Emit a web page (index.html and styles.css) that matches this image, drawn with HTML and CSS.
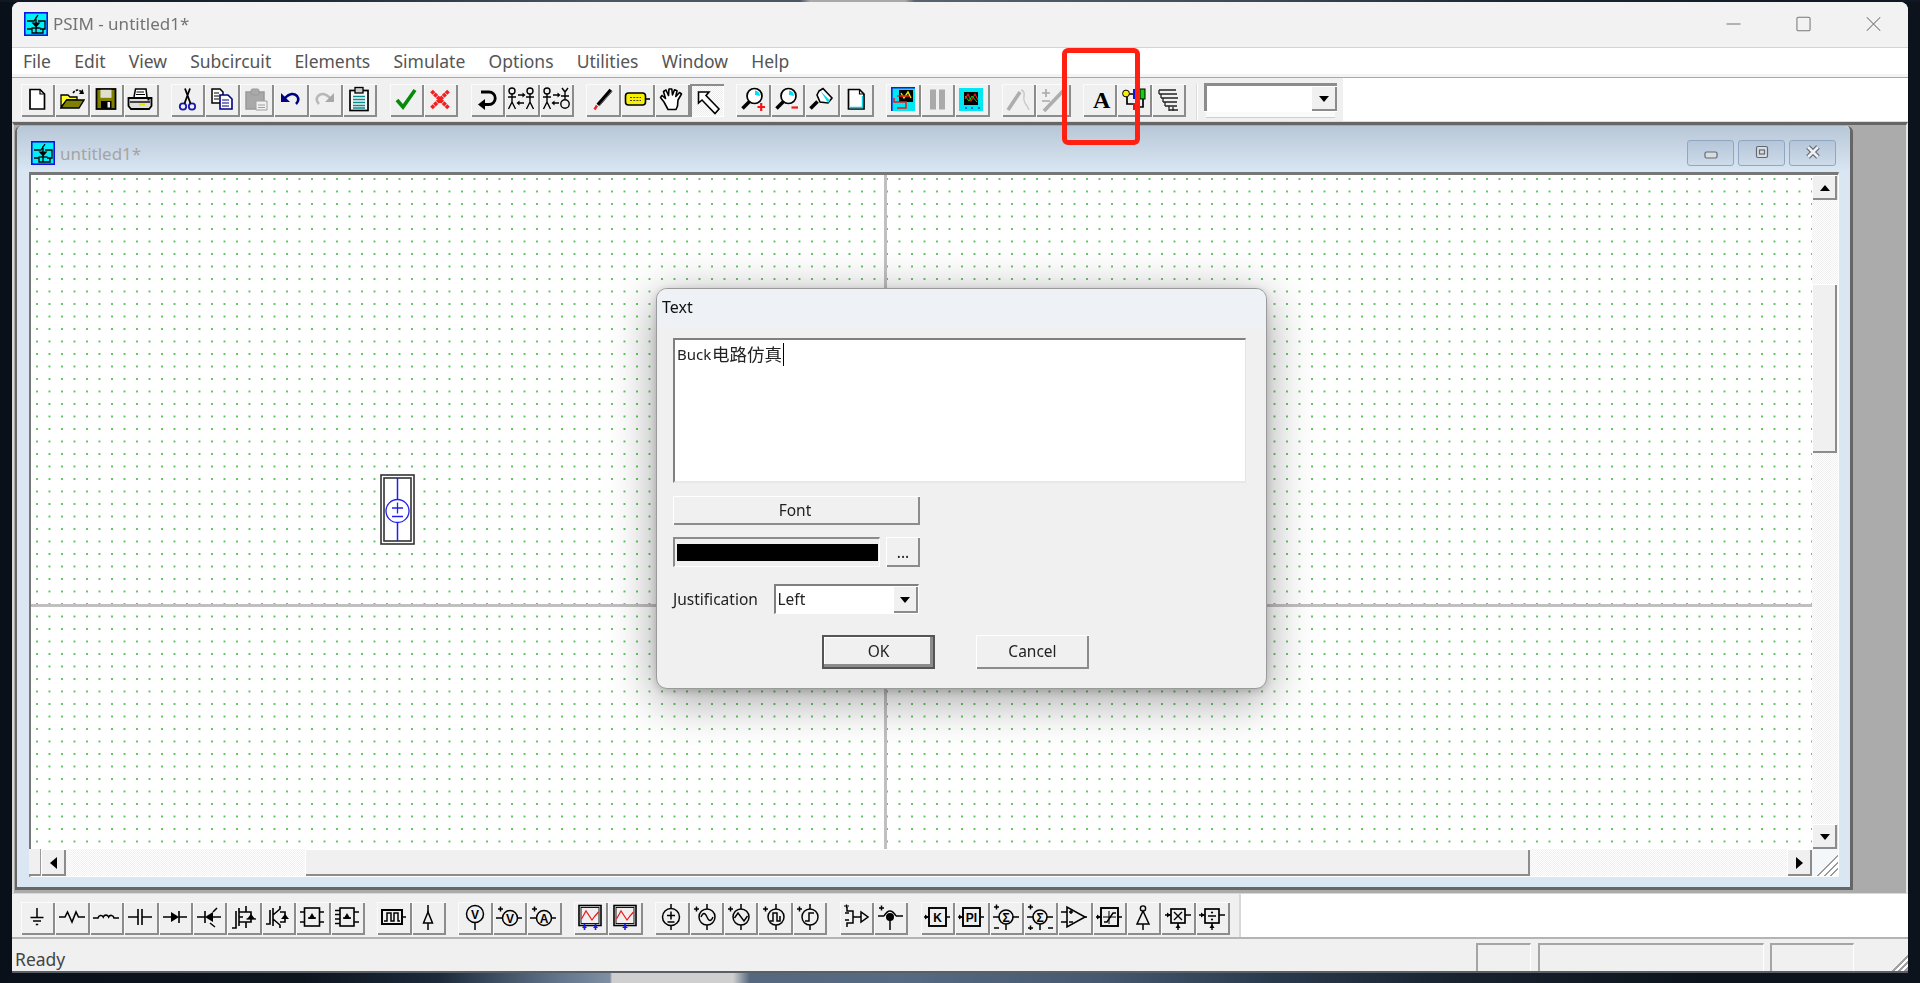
FILE: index.html
```
<!DOCTYPE html>
<html lang="en">
<head>
<meta charset="utf-8">
<title>PSIM - untitled1*</title>
<link rel="stylesheet" href="styles.css">
</head>
<body>
<svg class="defs" aria-hidden="true">
<defs>
<symbol id="psim" viewBox="0 0 24 24"><rect x=".8" y=".8" width="22.4" height="22.4" fill="#00f0f8" stroke="#1010e0" stroke-width="1.6"/><path d="M3 9H10L14 3M14 9H21V17H16M3 17H8V21H19V17M12 5V21" stroke="#000" stroke-width="1.3" fill="none"/><path d="M7.5 10.500H16.500L12 15.500Z" fill="#000"/><path d="M7.5 16H16.500" stroke="#000" stroke-width="1.3"/></symbol>
<symbol id="new" viewBox="0 0 26 26"><path d="M6 3.5H16L20.5 8V23H6Z" fill="#fff" stroke="#000" stroke-width="1.7"/><path d="M16 3.5V8H20.5" fill="none" stroke="#000" stroke-width="1.2"/></symbol>
<symbol id="open" viewBox="0 0 26 26"><path d="M2 21V9H9L11 11H18V14H8L2 21Z" fill="#ffff30" stroke="#000" stroke-width="1.3"/><path d="M2 22L7.5 14H25L20 22Z" fill="#808000" stroke="#000" stroke-width="1.3"/><path d="M14 7Q18 2 22 5.5" fill="none" stroke="#000" stroke-width="1.6" stroke-dasharray="2.5 1.2"/><path d="M20 8L25 8 23.5 3Z" fill="#000"/></symbol>
<symbol id="save" viewBox="0 0 26 26"><rect x="3.5" y="3" width="19" height="20" fill="#808000" stroke="#000" stroke-width="1.8"/><rect x="7.5" y="3.8" width="11" height="8" fill="#dfdfcf"/><rect x="8" y="15" width="10.5" height="7.5" fill="#000"/><rect x="14.5" y="16" width="2.5" height="5.5" fill="#eee"/></symbol>
<symbol id="print" viewBox="0 0 26 26"><path d="M7 11L8.5 3H19L20 11" fill="#fff" stroke="#000" stroke-width="1.5"/><path d="M9.5 6H17M9 8.5H18" stroke="#000" stroke-width="1"/><path d="M1.5 12H24.5V20L22 23H4L1.5 20Z" fill="#ddd" stroke="#000" stroke-width="1.8"/><path d="M3 16H23" stroke="#000" stroke-width="1.4"/><rect x="12" y="17.5" width="6" height="2" fill="#e8e000"/><rect x="20.5" y="13" width="2" height="1.5" fill="#000"/></symbol>
<symbol id="cut" viewBox="0 0 26 26"><circle cx="9" cy="20.5" r="3.2" fill="none" stroke="#1818b0" stroke-width="1.8"/><circle cx="18" cy="20.5" r="3.2" fill="none" stroke="#1818b0" stroke-width="1.8"/><path d="M10.5 17.5L16 2.5M16.5 17.5L11 2.5" stroke="#000" stroke-width="1.8" fill="none"/></symbol>
<symbol id="copy" viewBox="0 0 26 26"><path d="M3 3H11L14 6V17H3Z" fill="#fff" stroke="#000" stroke-width="1.5"/><path d="M5 7H10M5 10H10M5 13H10" stroke="#000"/><path d="M11 9H19L23 13V23H11Z" fill="#fff" stroke="#000080" stroke-width="1.6"/><path d="M13 14H20M13 17H20M13 20H20" stroke="#000080"/></symbol>
<symbol id="paste" viewBox="0 0 26 26"><path d="M3 6H21V23H3Z" fill="#a9a9a9" stroke="#999" stroke-width="1.5"/><rect x="8" y="3" width="8" height="6" rx="1.5" fill="#a9a9a9" stroke="#999"/><path d="M13 15H24V24H13Z" fill="#f0f0f0" stroke="#a0a0a0"/><path d="M15 19H22M15 21.5H22" stroke="#a0a0a0"/></symbol>
<symbol id="undo" viewBox="0 0 26 26"><path d="M8 12Q15 5 20 10Q23 14 19 18" fill="none" stroke="#000080" stroke-width="2.5"/><path d="M4 7V16H13Z" fill="#000080"/></symbol>
<symbol id="redo" viewBox="0 0 26 26"><path d="M18 12Q11 5 6 10Q3 14 7 18" fill="none" stroke="#b8b8b8" stroke-width="2.5"/><path d="M22 7V16H13Z" fill="#a8a8a8"/></symbol>
<symbol id="clip" viewBox="0 0 26 26"><rect x="4" y="4.5" width="18" height="20" fill="#f8f8f8" stroke="#000" stroke-width="1.7"/><rect x="9" y="1.5" width="8" height="5.5" fill="#ccc" stroke="#000" stroke-width="1.3"/><path d="M7 10.5H19M7 13.5H19M7 16.5H19M7 19.5H19M7 22H19" stroke="#0a8a8a" stroke-width="1.3"/></symbol>
<symbol id="ok" viewBox="0 0 26 26"><path d="M4 14L10 21L22 4" fill="none" stroke="#078a07" stroke-width="3.6"/></symbol>
<symbol id="no" viewBox="0 0 26 26"><path d="M4.5 5L21.5 22M21.5 5L4.5 22" fill="none" stroke="#f32020" stroke-width="3.8" stroke-dasharray="3.5 .6"/></symbol>
<symbol id="rot" viewBox="0 0 26 26"><path d="M7 6H15A6.2 6.2 0 0 1 15 18.5H10" fill="none" stroke="#000" stroke-width="2.8"/><path d="M11 13V24L4 18.5Z" fill="#000"/></symbol>
<symbol id="flip1" viewBox="0 0 30 26"><g fill="none" stroke="#000" stroke-width="1.4"><circle cx="6" cy="5" r="3"/><path d="M6 8V16M2 11H10M6 16L2.500 23M6 16L9.500 23"/><circle cx="24" cy="5" r="3"/><path d="M24 8V16M20 11H28M24 16L20.500 23M24 16L27.500 23M12 9H18M12 17H18"/></g><path d="M19.5 9L16.5 6.5V11.5ZM10.500 17L13.500 14.5V19.5Z" fill="#000"/></symbol>
<symbol id="flip2" viewBox="0 0 30 26"><g fill="none" stroke="#000" stroke-width="1.4"><circle cx="6" cy="5" r="3"/><path d="M6 8V16M2 11H10M6 16L2.500 23M6 16L9.500 23M21 2L24 6L27 2M24 6V13M20 10H28"/><circle cx="24" cy="18" r="4.2"/><path d="M12 9H18M12 17H18"/></g><path d="M19.5 9L16.5 6.5V11.5ZM10.500 17L13.500 14.5V19.5Z" fill="#000"/></symbol>
<symbol id="pencil" viewBox="0 0 26 26"><path d="M21 4L8 19" stroke="#000" stroke-width="4" fill="none"/><path d="M22 5L9 20" stroke="#777" stroke-width="1" fill="none"/><path d="M7 19.5L4.5 23.5" stroke="#f02020" stroke-width="2.4" fill="none"/></symbol>
<symbol id="label" viewBox="0 0 26 26"><rect x="1.5" y="7" width="20" height="12" rx="3" fill="#f8f000" stroke="#000" stroke-width="1.6"/><path d="M21 13H26" stroke="#000" stroke-width="1.6"/><path d="M6 11.5H17M6 14.5H17" stroke="#444" stroke-width="1.2" stroke-dasharray="2 1.2"/></symbol>
<symbol id="hand" viewBox="0 0 26 26"><path d="M6 16L2.5 11.5 4 9.5 7.5 12.5 5.5 5.5 8 4 10.5 9.5 11 3 13.8 3 14.5 9 16.5 3.8 19 4.8 17.8 10.5 21.5 6.5 23.5 8 20 14 19.5 20 18 23.5H10Z" fill="#fff" stroke="#000" stroke-width="1.6" stroke-linejoin="round"/></symbol>
<symbol id="arrow" viewBox="0 0 26 26"><path d="M3.5 3H14L11 6.5 24 20 20 24.5 7 11 3.5 14Z" fill="#fff" stroke="#000" stroke-width="1.6"/></symbol>
<symbol id="zin" viewBox="0 0 26 26"><circle cx="14.5" cy="10" r="7.5" fill="#fff" stroke="#000" stroke-width="1.7"/><path d="M15 4.5A5.5 5.5 0 0 1 20 10L15 9Z" fill="#00e0f0"/><path d="M9.5 15.5L2.5 22.5" stroke="#000" stroke-width="3.6"/><path d="M17.5 21H25M21.2 17V25" stroke="#f01818" stroke-width="2.2"/></symbol>
<symbol id="zout" viewBox="0 0 26 26"><circle cx="14.5" cy="10" r="7.5" fill="#fff" stroke="#000" stroke-width="1.7"/><path d="M15 4.5A5.5 5.5 0 0 1 20 10L15 9Z" fill="#00e0f0"/><path d="M9.5 15.5L2.5 22.5" stroke="#000" stroke-width="3.6"/><path d="M17.5 21.5H24" stroke="#f01818" stroke-width="2.2"/></symbol>
<symbol id="fit" viewBox="0 0 26 26"><path d="M11 5L15 2.5 24 12 20 17 12 16 9 9Z" fill="#fff" stroke="#000" stroke-width="1.6"/><path d="M12.5 5L22 14.5 20 17Z" fill="#00e0f0"/><path d="M9.5 15.5L2.5 22.5" stroke="#000" stroke-width="3.6"/></symbol>
<symbol id="page" viewBox="0 0 26 26"><path d="M5.5 3.5H16.5L21 8V23H5.5Z" fill="#fff" stroke="#000" stroke-width="1.7"/><path d="M7 21.5H19.5V10" fill="none" stroke="#00d8e8" stroke-width="1.4"/><path d="M16.5 3.5V8H21" fill="none" stroke="#000" stroke-width="1.2"/></symbol>
<symbol id="run" viewBox="0 0 26 26"><rect x="1" y="1" width="24" height="24" fill="#00e8f4"/><path d="M1.8 25V1.8H25" fill="none" stroke="#1818e0" stroke-width="1.6"/><rect x="9" y="4" width="14" height="12" fill="#000"/><path d="M11 7L14 12 18 6 21 12" fill="none" stroke="#e8e800" stroke-width="1.4"/><path d="M7 10H19M4 12V16H16V22H7" fill="none" stroke="#f01818" stroke-width="1.5"/></symbol>
<symbol id="pause" viewBox="0 0 26 26"><rect x="6" y="3.5" width="6" height="20" fill="#aaa"/><rect x="15" y="3.5" width="6" height="20" fill="#aaa"/></symbol>
<symbol id="sim" viewBox="0 0 26 26"><rect x="1" y="2" width="24" height="23" fill="#00e8f4"/><rect x="6" y="6" width="14" height="13" fill="#000"/><path d="M7 13L10 8 13 15 17 8 20 14" fill="none" stroke="#f01818" stroke-width="1.2"/><path d="M7 10L11 15 14 10 19 16" fill="none" stroke="#10d010" stroke-width="1"/><path d="M7 22H9M13 22H15M20 22H22" stroke="#2040e0" stroke-width="1.6"/></symbol>
<symbol id="dis1" viewBox="0 0 26 26"><path d="M3 24L15 6" stroke="#adadad" stroke-width="3.6" fill="none"/><path d="M16 4Q20 5 19 10T22 20L24 24" stroke="#c8c8c8" fill="none" stroke-width="1.4"/></symbol>
<symbol id="dis2" viewBox="0 0 26 26"><path d="M5 25L24 5" stroke="#adadad" stroke-width="3.6" fill="none"/><path d="M3 7H11M7 3V11M3 15H11" stroke="#a8a8a8" stroke-width="1.6"/></symbol>
<symbol id="blk" viewBox="0 0 26 26"><path d="M6 8H12M16 8H20M15 12V18H6V11M22 12V21H18" fill="none" stroke="#000" stroke-width="1.7"/><circle cx="5" cy="7.5" r="3.4" fill="#f8f000" stroke="#000"/><rect x="12" y="3" width="4" height="10" fill="#1010e0"/><rect x="19" y="3" width="5" height="10" fill="#10d010" stroke="#000"/><rect x="12" y="17" width="7" height="7" fill="#f01010"/></symbol>
<symbol id="tree" viewBox="0 0 26 26"><path d="M4 4H21M4 8H22M6 12H23M8 16H22M10 20H22M14 24H23M4 4V8M6 8V12M8 12V16M10 16V20M14 20V25M18 21V25" fill="none" stroke="#222" stroke-width="1.3"/></symbol>

<symbol id="gnd" viewBox="0 0 26 26"><path d="M13 4V13M6.5 13.5H19.5M9 17H17M11.8 20.5H14.2" stroke="#000" stroke-width="1.5"/></symbol>
<symbol id="res" viewBox="0 0 26 26"><path d="M0 13H6L8.5 8 13 18 17 8 19.5 13H26" fill="none" stroke="#000" stroke-width="1.6"/></symbol>
<symbol id="ind" viewBox="0 0 26 26"><path d="M0 14H5A3 3.5 0 0 1 10.3 13 3 3.5 0 0 1 15.6 13 3 3.5 0 0 1 21 14H26" fill="none" stroke="#000" stroke-width="1.6"/></symbol>
<symbol id="cap" viewBox="0 0 26 26"><path d="M1 13H11M11 5V21M15 5V21M15 13H25" fill="none" stroke="#000" stroke-width="1.6"/></symbol>
<symbol id="dio" viewBox="0 0 26 26"><path d="M1 13H9M17 13H25M17 7V19" fill="none" stroke="#000" stroke-width="1.6"/><path d="M9 8V18L17 13Z" fill="#000"/></symbol>
<symbol id="thy" viewBox="0 0 26 26"><path d="M1 13H9M17 13H25M9 7V19M17 8L21 4" fill="none" stroke="#000" stroke-width="1.6"/><path d="M17 8V18L9 13Z" fill="#000"/><path d="M14 19L19 23" stroke="#000" stroke-width="1.4"/></symbol>
<symbol id="mos" viewBox="0 0 26 26"><path d="M1 24H5V7M8 4V22M8 8H15V2M8 18H15V24M15 8H20V18H15M12 13H8" fill="none" stroke="#000" stroke-width="1.6"/><path d="M16 15H24L20 10Z" fill="#000"/><path d="M15.5 15H25" stroke="#000" stroke-width="1.3"/></symbol>
<symbol id="igb" viewBox="0 0 26 26"><path d="M1 20H5V6M8 4V22M8 11L15 5V2M8 15L15 21V24M15 8H20V18H15" fill="none" stroke="#000" stroke-width="1.6"/><path d="M16 15H24L20 10Z" fill="#000"/></symbol>
<symbol id="bk1" viewBox="0 0 26 26"><rect x="5.5" y="4" width="15" height="18" fill="none" stroke="#000" stroke-width="1.6"/><path d="M1 8H5.5M1 18H5.5M20.5 8H25M20.5 18H25M9 14H17" stroke="#000" stroke-width="1.5"/><path d="M9.5 15H16.5L13 9Z" fill="#000"/></symbol>
<symbol id="bk2" viewBox="0 0 26 26"><rect x="6" y="4" width="14" height="18" fill="none" stroke="#000" stroke-width="1.6"/><path d="M1 6.5H6M1 10.5H6M1 15H6M1 19.5H6M20 8H25M20 18H25M9 14H17" stroke="#000" stroke-width="1.3"/><path d="M9.5 15H16.5L13 9Z" fill="#000"/></symbol>
<symbol id="pul" viewBox="0 0 26 26"><rect x="2" y="6" width="20" height="14" fill="none" stroke="#000" stroke-width="2"/><path d="M4 17H7V9H11V17H14V9H18V17H20M22 13H26" fill="none" stroke="#000" stroke-width="1.5"/></symbol>
<symbol id="nod" viewBox="0 0 26 26"><path d="M13 1V8M13 19V26" stroke="#000" stroke-width="1.5"/><path d="M13 8L8.5 19H17.5Z" fill="none" stroke="#000" stroke-width="1.5"/></symbol>
<symbol id="vp" viewBox="0 0 26 26"><circle cx="13" cy="10" r="8.5" fill="none" stroke="#000" stroke-width="1.5"/><path d="M13 18.5V26" stroke="#000" stroke-width="1.5"/><text x="13" y="14.5" class="ict">V</text></symbol>
<symbol id="vm" viewBox="0 0 26 26"><circle cx="14" cy="14" r="7.5" fill="none" stroke="#000" stroke-width="1.5"/><path d="M0 14H6.5M21.5 14H26M2 5H7M4.5 2.5V7.5" stroke="#000" stroke-width="1.5"/><text x="14" y="18.5" class="ict">V</text></symbol>
<symbol id="am" viewBox="0 0 26 26"><circle cx="14" cy="14" r="7.5" fill="none" stroke="#000" stroke-width="1.5"/><path d="M0 14H6.5M21.5 14H26M2 5H7M4.5 2.5V7.5" stroke="#000" stroke-width="1.5"/><text x="14" y="18.5" class="ict">A</text></symbol>
<symbol id="sc1" viewBox="0 0 26 26"><rect x="2" y="1.5" width="22" height="20" fill="none" stroke="#000" stroke-width="1.6"/><rect x="4" y="3.5" width="18" height="16" fill="none" stroke="#000" stroke-width=".9"/><path d="M4.5 15L9 7 15 16 18 12 21.5 8" fill="none" stroke="#f01818" stroke-width="1.2"/><path d="M7.5 20V26M18.5 20V26" stroke="#1818f0" stroke-width="1.6"/><path d="M5 24L7.5 21 10 24ZM16 24L18.5 21 21 24Z" fill="#1818f0"/></symbol>
<symbol id="sc2" viewBox="0 0 26 26"><rect x="2" y="1.5" width="22" height="20" fill="none" stroke="#000" stroke-width="1.6"/><rect x="4" y="3.5" width="18" height="16" fill="none" stroke="#000" stroke-width=".9"/><path d="M4.5 15L9 7 15 16 18 12 21.5 8" fill="none" stroke="#f01818" stroke-width="1.2"/><path d="M13 20V26" stroke="#1818f0" stroke-width="1.6"/><path d="M10 24L13 21 16 24Z" fill="#1818f0"/></symbol>
<symbol id="vdc" viewBox="0 0 26 26"><circle cx="13" cy="13" r="8.5" fill="none" stroke="#000" stroke-width="1.5"/><path d="M13 0V4.5M13 21.5V26M9 11.5H17M13 7.5V15.5M9.5 18H16.5" stroke="#000" stroke-width="1.5"/></symbol>
<symbol id="vsin" viewBox="0 0 26 26"><circle cx="14" cy="13" r="8" fill="none" stroke="#000" stroke-width="1.5"/><path d="M14 0V5M14 21V26M1 5H6M3.5 2.5V7.5" stroke="#000" stroke-width="1.5"/><path d="M8 13Q11 6 14 13T20 13" fill="none" stroke="#000" stroke-width="1.4"/></symbol>
<symbol id="vtri" viewBox="0 0 26 26"><circle cx="14" cy="13" r="8" fill="none" stroke="#000" stroke-width="1.5"/><path d="M14 0V5M14 21V26M1 5H6M3.5 2.5V7.5" stroke="#000" stroke-width="1.5"/><path d="M7.5 14L11 9 17 17 20.5 12" fill="none" stroke="#000" stroke-width="1.4"/></symbol>
<symbol id="vsq" viewBox="0 0 26 26"><circle cx="14" cy="13" r="8" fill="none" stroke="#000" stroke-width="1.5"/><path d="M14 0V5M14 21V26M1 5H6M3.5 2.5V7.5" stroke="#000" stroke-width="1.5"/><path d="M8 17H11V9H15V17H18V12" fill="none" stroke="#000" stroke-width="1.5"/></symbol>
<symbol id="vst" viewBox="0 0 26 26"><circle cx="14" cy="13" r="8" fill="none" stroke="#000" stroke-width="1.5"/><path d="M14 0V5M14 21V26M1 5H6M3.5 2.5V7.5" stroke="#000" stroke-width="1.5"/><path d="M9 17H13V9H18" fill="none" stroke="#000" stroke-width="1.5"/></symbol>
<symbol id="log" viewBox="0 0 26 26"><path d="M4 3V7H10V19H4V23M10 13H18M2 9H6M2 16H6" fill="none" stroke="#000" stroke-width="1.5"/><path d="M18 8V18L25 13Z" fill="none" stroke="#000" stroke-width="1.5"/><path d="M1 2H6M3.5 .5V4" stroke="#000" stroke-width="1.2"/></symbol>
<symbol id="sen" viewBox="0 0 26 26"><path d="M1 12H7M19 12H26M13 16V26M2 4H7M4.5 1.5V6.5M7 12Q13 2 19 12" fill="none" stroke="#000" stroke-width="1.5"/><circle cx="13" cy="13" r="4" fill="#000"/></symbol>
<symbol id="kk" viewBox="0 0 26 26"><rect x="5" y="4" width="17" height="18" fill="none" stroke="#000" stroke-width="1.9"/><path d="M0 13H5M22 13H26" stroke="#000" stroke-width="1.5"/><path d="M1 10.5L4.5 13 1 15.5Z" fill="#000"/><text x="13.5" y="18" class="ict">K</text></symbol>
<symbol id="pi" viewBox="0 0 26 26"><rect x="5" y="4" width="17" height="18" fill="none" stroke="#000" stroke-width="1.9"/><path d="M0 13H5M22 13H26" stroke="#000" stroke-width="1.5"/><path d="M1 10.5L4.5 13 1 15.5Z" fill="#000"/><text x="13.5" y="18" class="ict">PI</text></symbol>
<symbol id="sum1" viewBox="0 0 26 26"><circle cx="13" cy="13" r="7" fill="none" stroke="#000" stroke-width="1.6"/><path d="M0 13H6M20 13H26M13 20V26M1 3H6M3.5 .5V5.5M1 24H6" stroke="#000" stroke-width="1.5"/><text x="13" y="17.5" class="ict">Σ</text></symbol>
<symbol id="sum2" viewBox="0 0 26 26"><circle cx="13" cy="13" r="7" fill="none" stroke="#000" stroke-width="1.6"/><path d="M0 13H6M20 13H26M13 20V26M1 3H6M3.5 .5V5.5M1 24H6M3.5 21.5V26.5M21 24H26" stroke="#000" stroke-width="1.5"/><text x="13" y="17.5" class="ict">Σ</text></symbol>
<symbol id="opa" viewBox="0 0 26 26"><path d="M6 3V23L24 13Z" fill="none" stroke="#000" stroke-width="1.6"/><path d="M0 8H6M0 18H6M24 13H26M8 8H12M10 6V10M8 18H12" stroke="#000" stroke-width="1.5"/></symbol>
<symbol id="lim" viewBox="0 0 26 26"><rect x="5" y="4" width="17" height="18" fill="none" stroke="#000" stroke-width="1.9"/><path d="M0 13H5M22 13H26M8 18H11L17 9H20" fill="none" stroke="#000" stroke-width="1.5"/><path d="M7 13H20M13 7V20" stroke="#000" stroke-width="1"/><path d="M1 10.5L4.5 13 1 15.5Z" fill="#000"/></symbol>
<symbol id="gat" viewBox="0 0 26 26"><circle cx="13" cy="4.5" r="2.6" fill="none" stroke="#000" stroke-width="1.4"/><path d="M13 7L7 20H19ZM13 20V26" fill="none" stroke="#000" stroke-width="1.5"/></symbol>
<symbol id="mul" viewBox="0 0 26 26"><rect x="6" y="5" width="14" height="14" fill="none" stroke="#000" stroke-width="1.7"/><path d="M0 11H6M20 11H26M13 19V26M9 8L17 16M17 8L9 16" stroke="#000" stroke-width="1.4"/><path d="M2 8.5L5.5 11 2 13.5ZM10.5 24L13 20 15.5 24Z" fill="#000"/></symbol>
<symbol id="div" viewBox="0 0 26 26"><rect x="6" y="5" width="14" height="14" fill="none" stroke="#000" stroke-width="1.7"/><path d="M0 11H6M20 11H26M13 19V26M9 12H17" stroke="#000" stroke-width="1.4"/><circle cx="13" cy="8.5" r="1.1" fill="#000"/><circle cx="13" cy="15.5" r="1.1" fill="#000"/><path d="M2 8.5L5.5 11 2 13.5ZM10.5 24L13 20 15.5 24Z" fill="#000"/></symbol>
</defs>
</svg>

<div class="window">
  <header class="titlebar">
    <svg class="appicon"><use href="#psim"/></svg>
    <span class="apptitle">PSIM - untitled1*</span>
    <div class="winctrls">
      <svg class="wc" viewBox="0 0 16 16"><path d="M.5 8H15.5"/></svg>
      <svg class="wc" viewBox="0 0 16 16"><rect x="1" y=".7" width="14" height="14.6" rx="1.5"/></svg>
      <svg class="wc" viewBox="0 0 16 16"><path d="M.8.8L15.2 15.2M15.2.8L.8 15.2"/></svg>
    </div>
  </header>
  <nav class="menubar">
    <span>File</span><span>Edit</span><span>View</span><span>Subcircuit</span><span>Elements</span><span>Simulate</span><span>Options</span><span>Utilities</span><span>Window</span><span>Help</span>
  </nav>
  <div class="toolrow toolrow-top">
    <div class="toolbar">
      <div class="grp"><button class="b"><svg><use href="#new"/></svg></button><button class="b"><svg><use href="#open"/></svg></button><button class="b"><svg><use href="#save"/></svg></button><button class="b"><svg><use href="#print"/></svg></button></div>
      <div class="grp"><button class="b"><svg><use href="#cut"/></svg></button><button class="b"><svg><use href="#copy"/></svg></button><button class="b"><svg><use href="#paste"/></svg></button><button class="b"><svg><use href="#undo"/></svg></button><button class="b"><svg><use href="#redo"/></svg></button><button class="b"><svg><use href="#clip"/></svg></button></div>
      <div class="grp"><button class="b"><svg><use href="#ok"/></svg></button><button class="b"><svg><use href="#no"/></svg></button></div>
      <div class="grp"><button class="b"><svg><use href="#rot"/></svg></button><button class="b"><svg class="wide"><use href="#flip1"/></svg></button><button class="b"><svg class="wide"><use href="#flip2"/></svg></button></div>
      <div class="grp"><button class="b"><svg><use href="#pencil"/></svg></button><button class="b"><svg><use href="#label"/></svg></button><button class="b"><svg><use href="#hand"/></svg></button><button class="b active"><svg><use href="#arrow"/></svg></button></div>
      <div class="grp"><button class="b"><svg><use href="#zin"/></svg></button><button class="b"><svg><use href="#zout"/></svg></button><button class="b"><svg><use href="#fit"/></svg></button><button class="b"><svg><use href="#page"/></svg></button></div>
      <div class="grp"><button class="b"><svg><use href="#run"/></svg></button><button class="b"><svg><use href="#pause"/></svg></button><button class="b"><svg><use href="#sim"/></svg></button></div>
      <div class="grp"><button class="b"><svg><use href="#dis1"/></svg></button><button class="b"><svg><use href="#dis2"/></svg></button></div>
      <div class="grp"><button class="b b-a"><span class="glyph-a">A</span></button><button class="b"><svg><use href="#blk"/></svg></button><button class="b"><svg><use href="#tree"/></svg></button></div>
      <div class="tsep"></div>
      <div class="combo"><span class="combo-btn"><span class="tri"></span></span></div>
    </div>
  </div>

  <main class="mdi">
    <section class="child">
      <div class="child-title">
        <svg class="childicon"><use href="#psim"/></svg>
        <span class="childname">untitled1*</span>
        <div class="childctrls">
          <span class="cb"><svg viewBox="0 0 24 16"><rect x="6" y="7" width="12" height="6" rx="1.5"/></svg></span>
          <span class="cb"><svg viewBox="0 0 24 16"><rect x="6.5" y="1.5" width="11" height="11" rx="1.5"/><rect x="9.5" y="5" width="5" height="4"/></svg></span>
          <span class="cb"><svg viewBox="0 0 24 16"><path d="M7 2L17 12M17 2L7 12" class="cx1"/><path d="M7 2L17 12M17 2L7 12" class="cx2"/></svg></span>
        </div>
      </div>
      <div class="frame">
        <div class="canvas">
          <span class="cross-v"></span><span class="cross-h"></span>
          <svg class="element" viewBox="0 0 35 71">
            <rect x="1" y="1" width="33" height="69" fill="#fff" stroke="#333" stroke-width="1.6"/>
            <rect x="4" y="4" width="27" height="63" fill="none" stroke="#333" stroke-width="1.6"/>
            <path d="M17.5 4V26M17.5 48V67" stroke="#2020f0" stroke-width="1.5"/>
            <circle cx="17.5" cy="37" r="11.5" fill="#fff" stroke="#2020f0" stroke-width="1.3"/>
            <path d="M12 34H23M17.5 28.500V39.500M12 42.500H23" stroke="#2020f0" stroke-width="1.3"/>
          </svg>
        </div>
        <div class="vscroll">
          <button class="sb"><span class="tri tri-up"></span></button>
          <div class="track"><div class="vthumb"></div></div>
          <button class="sb"><span class="tri"></span></button>
        </div>
        <div class="hscroll">
          <span class="hstub"></span>
          <button class="sb"><span class="tri tri-left"></span></button>
          <div class="track"><div class="hthumb"></div></div>
          <button class="sb"><span class="tri tri-right"></span></button>
        </div>
        <div class="grip"></div>
      </div>
    </section>
  </main>

  <div class="toolrow toolrow-bottom">
    <div class="toolbar">
      <div class="grp"><button class="b"><svg><use href="#gnd"/></svg></button><button class="b"><svg><use href="#res"/></svg></button><button class="b"><svg><use href="#ind"/></svg></button><button class="b"><svg><use href="#cap"/></svg></button><button class="b"><svg><use href="#dio"/></svg></button><button class="b"><svg><use href="#thy"/></svg></button><button class="b"><svg><use href="#mos"/></svg></button><button class="b"><svg><use href="#igb"/></svg></button><button class="b"><svg><use href="#bk1"/></svg></button><button class="b"><svg><use href="#bk2"/></svg></button></div>
      <div class="grp"><button class="b"><svg><use href="#pul"/></svg></button><button class="b"><svg><use href="#nod"/></svg></button></div>
      <div class="grp"><button class="b"><svg><use href="#vp"/></svg></button><button class="b"><svg><use href="#vm"/></svg></button><button class="b"><svg><use href="#am"/></svg></button></div>
      <div class="grp"><button class="b"><svg><use href="#sc1"/></svg></button><button class="b"><svg><use href="#sc2"/></svg></button></div>
      <div class="grp"><button class="b"><svg><use href="#vdc"/></svg></button><button class="b"><svg><use href="#vsin"/></svg></button><button class="b"><svg><use href="#vtri"/></svg></button><button class="b"><svg><use href="#vsq"/></svg></button><button class="b"><svg><use href="#vst"/></svg></button></div>
      <div class="grp"><button class="b"><svg><use href="#log"/></svg></button><button class="b"><svg><use href="#sen"/></svg></button></div>
      <div class="grp"><button class="b"><svg><use href="#kk"/></svg></button><button class="b"><svg><use href="#pi"/></svg></button><button class="b"><svg><use href="#sum1"/></svg></button><button class="b"><svg><use href="#sum2"/></svg></button><button class="b"><svg><use href="#opa"/></svg></button><button class="b"><svg><use href="#lim"/></svg></button><button class="b"><svg><use href="#gat"/></svg></button><button class="b"><svg><use href="#mul"/></svg></button><button class="b"><svg><use href="#div"/></svg></button></div>
    </div>
  </div>

  <footer class="statusbar">
    <span class="ready">Ready</span>
    <span class="pane pane-a"></span><span class="pane pane-b"></span><span class="pane pane-c"></span>
    <span class="corner"></span>
  </footer>
</div>

<div class="dialog">
  <div class="dlg-title">Text</div>
  <div class="dlg-body">
    <div class="textbox"><span class="tb-lat">Buck</span><span class="tb-cjk">电路仿真</span><span class="caret"></span></div>
    <button class="wb font-btn">Font</button>
    <div class="color-row">
      <div class="swatch"><span class="swatch-fill"></span></div>
      <button class="wb dots">...</button>
    </div>
    <div class="just-row">
      <span class="just-label">Justification</span>
      <div class="select"><span class="sel-text">Left</span><span class="sel-btn"><span class="tri"></span></span></div>
    </div>
    <div class="dlg-actions">
      <button class="wb act default">OK</button>
      <button class="wb act">Cancel</button>
    </div>
  </div>
</div>

<div class="annotation"></div>
</body>
</html>
```

FILE: styles.css
```
* { box-sizing: border-box; }
html, body { margin: 0; padding: 0; }
body {
  width: 1920px;
  height: 983px;
  overflow: hidden;
  padding: 2px 12px 0;
  position: relative;
  font-family: "Noto Sans", "Open Sans", sans-serif;
  background:
    linear-gradient(90deg, #0e1722 0, #1c2733 300px, #4b5663 600px, #4b5663 800px, #a9a9a9 810px, #a9a9a9 905px, #59636f 915px, #3c4652 1280px, #1c2733 1500px, #0e1722 1920px) top left / 100% 2px no-repeat,
    linear-gradient(90deg, #0a1019 0, #0c141e 300px, #1c2a3b 440px, #62758c 560px, #7f8fa3 610px, #cfcfcf 612px, #cfcfcf 733px, #55677e 750px, #566a83 900px, #45586f 1100px, #2a3a4d 1270px, #18222f 1460px, #0c131c 1700px, #0c131c 1920px);
}
.defs { position: absolute; width: 0; height: 0; }
.ict { font: 700 12px "Liberation Sans", sans-serif; text-anchor: middle; fill: #000; stroke: none; }

.window {
  width: 1896px;
  height: 969px;
  display: flex;
  flex-direction: column;
  background: #f0f0f0;
  border-radius: 8px 8px 0 0;
  overflow: hidden;
  box-shadow: 0 2px 0 #5a5f66;
  filter: blur(.35px);
}
.titlebar {
  height: 45px;
  flex: none;
  background: #f2f2f2;
  display: flex;
  align-items: center;
  padding-left: 12px;
  padding-bottom: 2px;
}
.appicon { width: 24px; height: 24px; }
.apptitle { margin-left: 5px; font-size: 17px; color: #737373; }
.winctrls { margin-left: auto; display: flex; gap: 55px; padding-right: 27px; align-items: center; }
.wc { width: 15px; height: 16px; fill: none; stroke: #777; stroke-width: 1.1; }

.menubar {
  height: 31px;
  flex: none;
  background: #fff;
  border-top: 1px solid #d4d4d4;
  border-bottom: 1px solid #a8a8a8;
  box-shadow: inset 0 -3px 0 #f4f4f4;
  display: flex;
  gap: 23.2px;
  align-items: center;
  padding: 0 0 3px 11px;
  font-size: 17.500px;
  color: #555;
}
.toolrow { background: #fff; flex: none; }
.toolrow-top { height: 44px; border-bottom: 1px solid #ddd; }
.toolrow-bottom { height: 45px; border-bottom: 2px solid #b4b4b4; }
.toolbar {
  height: 100%;
  background: #f0f0f0;
  display: flex;
  gap: 12.4px;
  padding: 6px 0 0 9px;
}
.toolrow-top .toolbar { width: 1331px; }
.toolrow-bottom .toolbar { width: 1229px; padding-top: 8px; border-right: 2px solid #d8d8d8; }
.grp { display: flex; }
.b {
  width: 34.4px;
  height: 33px;
  padding: 0 2px 3px 0;
  margin: 0;
  border: 0;
  background: #f0f0f0;
  box-shadow: inset 1px 1px 0 #fbfbfb, inset -2px -2px 0 #8c8c8c;
  display: flex;
  align-items: center;
  justify-content: center;
}
.b svg { width: 26px; height: 26px; flex: none; }
.b svg.wide { width: 30px; }
.b.b-a { padding: 0 0 1px 3px; }
.b.active {
  background: repeating-conic-gradient(#ffffff 0 25%, #ececec 0 50%) 0 0 / 2px 2px;
  box-shadow: inset 2px 2px 0 #8c8c8c, inset -1px -1px 0 #fff;
  padding: 2px 0 0 2px;
}
.glyph-a { font: 700 24px "Liberation Serif", serif; color: #000; }
.tsep { width: 2px; height: 36px; margin: 0 -6px 0 -3px; background: #dcdcdc; border-right: 1px solid #fff; }
.combo {
  width: 133px;
  height: 28px;
  margin-top: -1px;
  background: #fff;
  border-top: 3px solid #8c8c8c;
  border-left: 3px solid #8c8c8c;
  box-shadow: 0 1px 0 #fff, 0 8px 0 -2px #fafafa, 0 9px 0 -2px #cfcfcf;
  display: flex;
  justify-content: flex-end;
}
.combo-btn, .sel-btn {
  width: 26px;
  height: 100%;
  background: #f0f0f0;
  box-shadow: inset 1px 1px 0 #fff, inset -2px -2px 0 #8c8c8c;
  display: flex;
  align-items: center;
  justify-content: center;
}
.tri { width: 0; height: 0; border-left: 5px solid transparent; border-right: 5px solid transparent; border-top: 6px solid #000; display: block; }
.tri-up { border-top: 0; border-bottom: 6px solid #000; }
.tri-left { border: 0 solid transparent; border-width: 6px 7px 6px 0; border-right-color: #000; }
.tri-right { border: 0 solid transparent; border-width: 6px 0 6px 7px; border-left-color: #000; }

.mdi {
  flex: 1;
  min-height: 0;
  background: #ababab;
  border-top: 3px solid #666;
  border-left: 2px solid #d8d8d8;
  border-right: 2px solid #e4e4e4;
  border-bottom: 1px solid #d8d8d8;
  padding: 1px 53px 3px 1px;
}
.child {
  height: 100%;
  display: flex;
  flex-direction: column;
  background: #dae6f2;
  border-right: 3px solid #666;
  border-bottom: 3px solid #666;
  border-top: 0;
  border-left: 2px solid #666;
  border-radius: 6px 6px 0 0;
  padding: 0 11px 10px 12px;
}
.child-title {
  height: 46px;
  flex: none;
  margin: 0 -11px 0 -12px;
  padding: 8px 14px 0 14px;
  background: linear-gradient(#b8c7d7, #d9e6f3);
  border-radius: 6px 6px 0 0;
  display: flex;
  align-items: center;
}
.childicon { width: 24px; height: 24px; }
.childname { margin-left: 5px; font-size: 17px; color: #a4a4a4; }
.childctrls { margin-left: auto; display: flex; gap: 4px; margin-right: 0; }
.cb {
  width: 47px;
  height: 26px;
  border: 1px solid #90a7c2;
  border-radius: 3px;
  background: linear-gradient(#b5c6d9, #cddbea);
  display: flex;
  align-items: center;
  justify-content: center;
}
.cb svg { width: 24px; height: 16px; fill: #dcdcdc; stroke: #5f6a78; stroke-width: 1.2; }
.cb .cx1 { stroke: #5f6a78; stroke-width: 5; fill: none; }
.cb .cx2 { stroke: #f0f0f0; stroke-width: 2.6; fill: none; }

.frame {
  flex: 1;
  min-height: 0;
  display: grid;
  grid-template-columns: 1fr 26px;
  grid-template-rows: 1fr 27px;
  border-top: 3px solid #777;
  border-left: 2px solid #777;
  border-right: 1px solid #fff;
  border-bottom: 1px solid #fff;
}
.canvas {
  position: relative;
  overflow: hidden;
  background-color: #fff;
  background-image: radial-gradient(circle at 1px 1px, #48bc48 .6px, rgba(72,188,72,0) 1.3px);
  background-size: 12.5px 12.5px;
  background-position: 5px 3px;
}
.cross-v { position: absolute; left: 853px; top: 0; bottom: 0; width: 2.5px; background: #c0c0c0; }
.cross-h { position: absolute; left: 0; right: 0; top: 429px; height: 2.5px; background: #c0c0c0; }
.element { position: absolute; left: 349px; top: 299px; width: 35px; height: 71px; }
.vscroll { display: flex; flex-direction: column; }
.hscroll { display: flex; margin-left: -2px; }
.track {
  flex: 1;
  min-width: 0;
  min-height: 0;
  background: repeating-conic-gradient(#ffffff 0 25%, #f0f0f0 0 50%) 0 0 / 2px 2px;
  position: relative;
}
.sb {
  width: 25px;
  height: 25px;
  flex: none;
  padding: 0;
  border: 0;
  background: #f0f0f0;
  box-shadow: inset 1px 1px 0 #fff, inset -2px -2px 0 #8c8c8c;
  display: flex;
  align-items: center;
  justify-content: center;
}
.hscroll .sb { height: 100%; }
.hstub { width: 12px; border-right: 1px solid #999; background: #f0f0f0; box-shadow: inset 0 -2px 0 #8c8c8c; flex: none; }
.vthumb { position: absolute; left: 0; width: 25px; top: 84px; height: 169px; background: #f0f0f0; box-shadow: inset 1px 1px 0 #fff, inset -2px -2px 0 #8c8c8c; }
.hthumb { position: absolute; top: 0; bottom: 0; left: 239px; width: 1225px; background: #f0f0f0; box-shadow: inset 1px 1px 0 #fff, inset -2px -2px 0 #8c8c8c; }
.grip { background: linear-gradient(135deg, #f4f7fa 60%, #9a9a9a 60%, #9a9a9a 64%, #fff 64%, #fff 72%, #9a9a9a 72%, #9a9a9a 76%, #fff 76%, #fff 84%, #9a9a9a 84%, #9a9a9a 88%, #fff 88%); }

.statusbar {
  height: 32px;
  flex: none;
  background: #f0f0f0;
  display: flex;
  align-items: flex-end;
  padding-right: 54px;
  position: relative;
}
.ready { margin-right: auto; padding: 0 0 0 3px; font-size: 17.500px; line-height: 24px; color: #444; }
.pane { height: 28px; border-top: 2px solid #a5a5a5; border-left: 2px solid #a5a5a5; border-right: 1px solid #fff; }
.pane-a { width: 55px; margin-right: 7px; }
.pane-b { width: 226px; margin-right: 6px; }
.pane-c { width: 84px; }
.corner { position: absolute; right: 0; bottom: 0; width: 18px; height: 18px; background: linear-gradient(135deg, transparent 55%, #a0a0a0 55%, #a0a0a0 62%, #fff 62%, #fff 72%, #a0a0a0 72%, #a0a0a0 79%, #fff 79%, #fff 88%, #a0a0a0 88%); }

.dialog {
  position: absolute;
  left: 656px;
  top: 288px;
  width: 611px;
  height: 401px;
  background: #f0f0f0;
  border: 1px solid #9a9a9a;
  border-radius: 11px;
  box-shadow: 0 10px 48px rgba(0,0,0,.38), 0 2px 8px rgba(0,0,0,.18);
  overflow: hidden;
  font-size: 15.500px;
  color: #222;
  display: flex;
  flex-direction: column;
  filter: blur(.35px);
}
.dlg-title { height: 39px; flex: none; background: #eef2f6; padding: 8px 0 0 5px; font-size: 16px; line-height: 20px; color: #111; }
.dlg-body { padding: 10px 0 0 16px; display: flex; flex-direction: column; align-items: flex-start; }
.textbox {
  width: 573px;
  height: 145px;
  background: #fff;
  border-top: 2px solid #808080;
  border-left: 2px solid #808080;
  border-right: 1px solid #e4e4e4;
  border-bottom: 2px solid #e8e8e8;
  padding: 3px 0 0 2px;
  display: flex;
  align-items: flex-start;
  line-height: 22px;
}
.tb-lat { font-size: 15px; width: 35px; white-space: nowrap; }
.tb-cjk { font-family: "Noto Sans CJK SC", "Noto Sans", sans-serif; font-size: 17.500px; color: #222; }
.caret { width: 1px; height: 23px; background: #000; margin-left: 1px; }
.wb {
  margin: 0;
  border: 0;
  padding: 0 0 2px;
  background: #f0f0f0;
  font: inherit;
  color: #222;
  box-shadow: inset 1px 1px 0 #fff, inset -2px -2px 0 #8c8c8c, inset 0 0 0 1px #e4e4e4;
}
.font-btn { width: 247px; height: 29px; margin-top: 13px; padding-right: 3px; }
.color-row { display: flex; gap: 6px; margin-top: 12px; }
.swatch { width: 207px; height: 30px; padding: 5px 1px 5px 2px; border-top: 2px solid #8c8c8c; border-left: 2px solid #8c8c8c; border-right: 1px solid #fff; border-bottom: 1px solid #fff; }
.swatch-fill { display: block; height: 100%; background: #000; }
.dots { width: 34px; height: 30px; line-height: 30px; padding: 0; }
.just-row { display: flex; align-items: center; margin-top: 17px; }
.just-label { width: 100.500px; font-size: 15.500px; }
.select { width: 145px; height: 30px; background: #fff; display: flex; border-top: 2px solid #808080; border-left: 2px solid #808080; border-right: 1px solid #fff; border-bottom: 1px solid #fff; }
.sel-text { flex: 1; padding-left: 2px; line-height: 27px; font-size: 15.500px; }
.sel-btn { height: 100%; width: 25px; }
.dlg-actions { display: flex; gap: 41px; margin: 21px 0 0 149px; }
.act { width: 113px; height: 34px; }
.default { box-shadow: inset 0 0 0 2px #555, inset -2px -2px 0 3px #8c8c8c, inset 3px 3px 0 #fff; }

.annotation {
  position: absolute;
  left: 1062px;
  top: 48px;
  width: 78px;
  height: 97px;
  border: 5px solid #ff2012;
  border-radius: 6px;
}
```
